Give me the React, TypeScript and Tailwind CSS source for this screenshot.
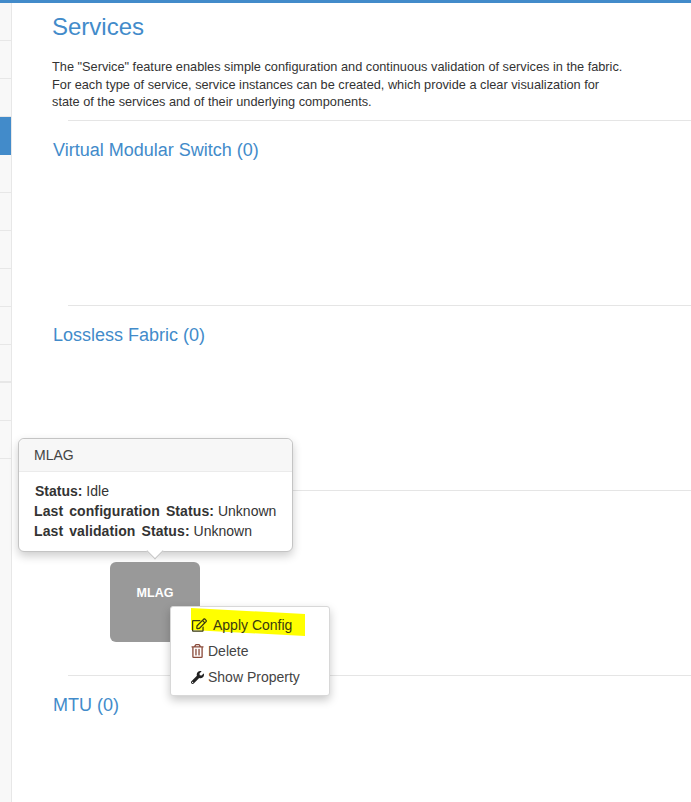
import { FaRegEdit, FaRegTrashAlt, FaWrench } from 'react-icons/fa'

const SIDE_ROWS = [0, 1, 2, 3, 4, 5, 6, 7, 8, 9, 10, 11]

// the MLAG heading sits behind the popover in the picture, so it has no title here
const SECTIONS = [
  { id: 'vms', title: 'Virtual Modular Switch (0)' },
  { id: 'lossless', title: 'Lossless Fabric (0)' },
  { id: 'mlag', title: '' },
  { id: 'mtu', title: 'MTU (0)' },
]

function Sidebar() {
  return (
    <aside className="w-3 shrink-0 bg-[#f8f8f8] border-r border-[#e7e7e7] pt-[3px]">
      {SIDE_ROWS.map((row) => (
        <div
          key={row}
          className={
            row === 3
              ? 'h-[38px] bg-[#428bca]'
              : row === 9
                ? 'h-[38px] border-b-2 border-[#e7e7e7]'
                : 'h-[38px] border-b border-[#e7e7e7]'
          }
        />
      ))}
    </aside>
  )
}

function NodePopover() {
  return (
    <div className="absolute left-[18px] top-[438px] w-[275px] h-[114px] bg-white border border-[#c4c4c4] rounded-md shadow-[0_4px_10px_rgba(0,0,0,0.2)] text-sm text-[#333]">
      <div className="h-[33px] bg-[#f7f7f7] border-b border-[#ebebeb] rounded-t-md pl-[15px] pt-[7px] leading-[18px] text-[#444]">MLAG</div>
      <div className="pl-[15px] pt-[9px] leading-5">
        <div className="pl-px"><b>Status:</b> Idle</div>
        <div><b className="[word-spacing:2px] tracking-[0.1px]">Last configuration Status:</b> Unknown</div>
        <div><b className="[word-spacing:2px] tracking-[0.1px]">Last validation Status:</b> Unknown</div>
      </div>
      <div className="absolute left-[130px] top-[106px] w-3 h-3 rotate-45 bg-white border-r border-b border-[#c4c4c4]" />
    </div>
  )
}

function ContextMenu() {
  return (
    <div className="absolute left-[170px] top-[606px] w-[160px] h-[90px] bg-white border border-[#d8d8d8] rounded-[3px] shadow-[0_4px_10px_rgba(0,0,0,0.22)] text-sm text-[#333]">
      <svg className="absolute left-0 top-0" width="158" height="40" aria-hidden>
        <polygon points="20,1 134,7 134,29 20,23" fill="#ffff00" />
      </svg>
      <div className="relative flex flex-col pt-[5px] pl-[20px]">
        <div className="h-[26px] flex items-center gap-[6px] pl-px text-[#3a3a10]">
          <FaRegEdit className="w-[15px] h-[14px]" />
          <span>Apply Config</span>
        </div>
        <div className="h-[26px] flex items-center gap-[4px] text-[#444]">
          <FaRegTrashAlt className="w-[13px] h-[14px] text-[#8a4a3a]" />
          <span>Delete</span>
        </div>
        <div className="h-[26px] flex items-center gap-[4px] text-[#444]">
          <FaWrench className="w-[13px] h-[13px] text-[#222]" />
          <span>Show Property</span>
        </div>
      </div>
    </div>
  )
}

export default function App() {
  return (
    <div className="relative h-[802px] w-[691px] overflow-hidden bg-white font-['Liberation_Sans',Arial,sans-serif]">
      <div className="relative z-10 h-[3px] bg-[#428bca]" />
      <div className="flex h-[802px] -mt-[3px]">
        <Sidebar />
        <main className="flex-1 pt-[3px] pl-10 overflow-hidden">
          <h1 className="text-2xl leading-[26px] text-[#428bca] pt-[11px]">Services</h1>
          <p className="mt-[18px] w-[600px] text-[12.75px] leading-[17.5px] text-[#333]">
            The "Service" feature enables simple configuration and continuous validation of services in the fabric.
            <br />
            For each type of service, service instances can be created, which provide a clear visualization for
            <br />
            state of the services and of their underlying components.
          </p>
          <div className="mt-[9px]">
            {SECTIONS.map((s) => (
              <section key={s.id} className="h-[185px]">
                <div className="ml-4 border-t border-[#e5e5e5]" />
                {s.title && <h2 className="pt-[19px] pl-px text-lg leading-5 text-[#428bca]">{s.title}</h2>}
              </section>
            ))}
          </div>
        </main>
      </div>

      <NodePopover />
      <div className="absolute left-[110px] top-[562px] w-[90px] h-20 rounded-md bg-[#999] flex items-center justify-center pb-[18px] text-[12.5px] font-bold text-white">
        MLAG
      </div>
      <ContextMenu />
    </div>
  )
}
